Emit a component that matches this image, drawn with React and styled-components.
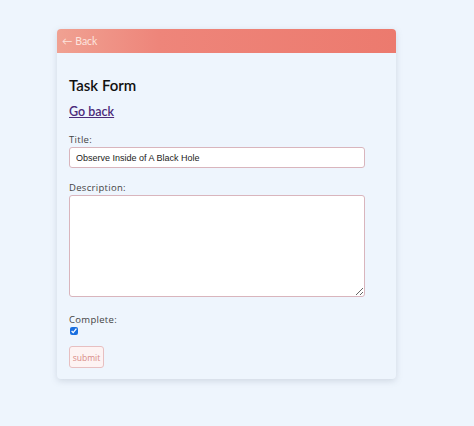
import React from "react";
import styled, { createGlobalStyle } from "styled-components";

const Global = createGlobalStyle`
  html, body {
    margin: 0;
    padding: 0;
    background: #eef5fd;
  }
  body {
    font-family: "Open Sans", "Noto Sans", sans-serif;
  }
`;

const App = () => {
  return (
    <Page>
      <Global />
      <Card>
        <TopBar>
          <BackLink href="#">← Back</BackLink>
        </TopBar>
        <Body>
          <Heading>Task Form</Heading>
          <GoBack href="#">Go back</GoBack>
          <Form onSubmit={(e) => e.preventDefault()}>
            <Field $after={14}>
              <Label htmlFor="title">Title:</Label>
              <TextInput id="title" defaultValue="Observe Inside of A Black Hole" />
            </Field>
            <Field $after={17}>
              <Label htmlFor="description">Description:</Label>
              <TextArea id="description" />
            </Field>
            <Field $after={11}>
              <Label htmlFor="complete">Complete:</Label>
              <Check id="complete" type="checkbox" defaultChecked />
            </Field>
            <Submit type="submit">submit</Submit>
          </Form>
        </Body>
      </Card>
    </Page>
  );
};

const Page = styled.div`
  padding: 29px 0 40px 57px;
`;

const Card = styled.div`
  width: 339px;
  background: #eef5fd;
  border-radius: 4px;
  box-shadow: 0 2px 6px rgba(120, 130, 150, 0.25);
  overflow: hidden;
`;

const TopBar = styled.div`
  height: 24px;
  display: flex;
  align-items: center;
  padding-left: 5px;
  background: linear-gradient(90deg, #f0a192 0%, #ee857a 30%, #ec7a6e 100%);
`;

const BackLink = styled.a`
  font-family: "Lato", sans-serif;
  color: #fde4de;
  font-size: 10.5px;
  text-decoration: none;
`;

const Body = styled.div`
  display: flex;
  flex-direction: column;
  align-items: flex-start;
  padding: 22px 31px 11px 12px;
`;

const Heading = styled.h2`
  margin: 0;
  font-family: "Lato", sans-serif;
  font-size: 15px;
  font-weight: 600;
  color: #111;
  line-height: 20px;
`;

const GoBack = styled.a`
  margin-top: 9px;
  font-family: "Lato", sans-serif;
  font-size: 12.5px;
  font-weight: 600;
  color: #4b2a7a;
  line-height: 16px;
`;

const Form = styled.form`
  display: flex;
  flex-direction: column;
  margin-top: 14px;
`;

const Field = styled.div`
  display: flex;
  flex-direction: column;
  align-items: flex-start;
  margin-bottom: ${(p) => p.$after}px;
`;

const Label = styled.label`
  font-size: 9.5px;
  font-weight: 400;
  color: #444;
  letter-spacing: 0.3px;
  line-height: 12px;
`;

const TextInput = styled.input`
  box-sizing: border-box;
  display: block;
  margin-top: 1px;
  width: 296px;
  height: 21px;
  padding: 0 6px;
  border: 1px solid #d9b5bd;
  border-radius: 3px;
  background: #fff;
  font-family: "Liberation Sans", Arial, sans-serif;
  font-size: 9px;
  color: #222;
`;

const TextArea = styled.textarea`
  box-sizing: border-box;
  display: block;
  margin-top: 1px;
  width: 296px;
  height: 102px;
  border: 1px solid #d9b5bd;
  border-radius: 3px;
  background: #fff;
  resize: both;
`;

const Check = styled.input`
  display: block;
  width: 8px;
  height: 8px;
  margin: 1px 0 0 1px;
  accent-color: #1a6fe0;
`;

const Submit = styled.button`
  align-self: flex-start;
  width: 35px;
  height: 22px;
  padding: 0;
  border: 1px solid #e7bfc1;
  border-radius: 3px;
  background: #fdf3f3;
  color: #d88a86;
  font-family: "Open Sans", sans-serif;
  font-size: 8.5px;
`;

export default App;
